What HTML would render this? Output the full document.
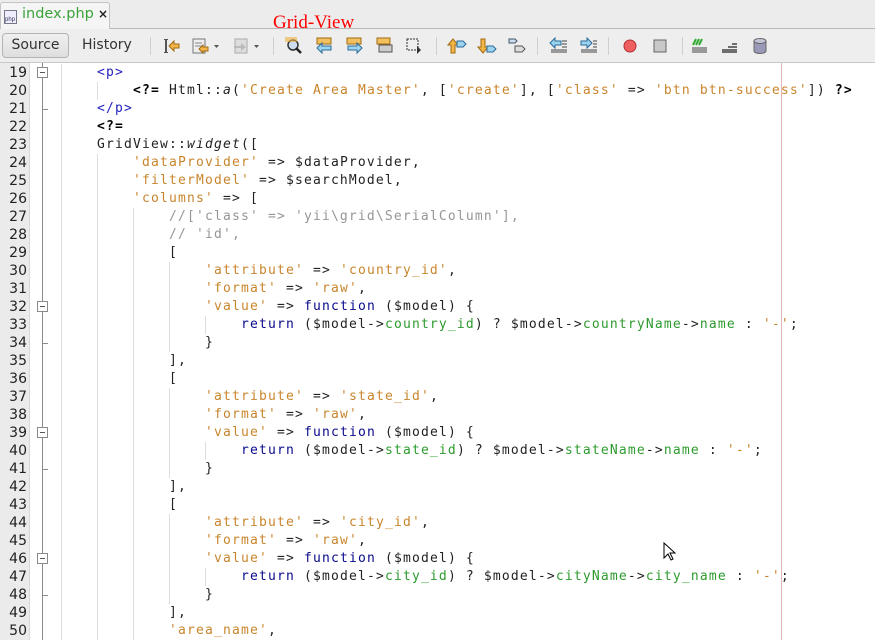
<!DOCTYPE html>
<html><head><meta charset="utf-8"><style>
*{margin:0;padding:0;box-sizing:border-box}
body{width:875px;height:640px;overflow:hidden;background:#fff;position:relative;font-family:"DejaVu Sans","Liberation Sans",sans-serif}
#tabbar{position:absolute;left:0;top:0;width:875px;height:29px;background:#ececec;border-bottom:1px solid #b8b8b8}
#tab{position:absolute;left:0;top:2px;width:110px;height:27px;background:#f5f5f5;border:1px solid #c4c4c4;border-bottom:none;border-radius:3px 3px 0 0}
#tab .t{position:absolute;left:21px;top:3px;font-size:14.5px;color:#3aa23a}
#tab .x{position:absolute;left:97px;top:4px;font-size:12px;color:#222;font-weight:bold}
#grid{position:absolute;left:273px;top:12px;font-family:"Liberation Serif",serif;font-size:19px;color:#ff0000}
#tb{position:absolute;left:0;top:29px;width:875px;height:34px;background:#eeeeee;border-bottom:1px solid #c8c8c8}
#src{position:absolute;left:2px;top:4px;width:67px;height:25px;border:1px solid #b4b4b4;border-radius:4px;background:linear-gradient(#f0f0f0,#dedede);font-size:14px;color:#333;text-align:center;line-height:23px}
#hist{position:absolute;left:82px;top:8px;font-size:14px;color:#333}
.sep{position:absolute;top:8px;width:1px;height:18px;background:#cfcfcf}
.ic{position:absolute;top:8px}
#ed{position:absolute;left:0;top:64px;width:875px;height:576px}
#gut{position:absolute;left:0;top:-1px;width:30px;height:577px;background:#ebebeb;border-right:1px solid #d8d8d8}
.ln{position:absolute;left:0;width:27px;text-align:right;font-size:14px;color:#222;height:18px;line-height:18px}
#fold{position:absolute;left:42px;top:-1px;width:1px;height:577px;background:#8a8a8a}
.fb{position:absolute;left:37px;width:11px;height:11px;border:1px solid #8a8a8a;background:#fff}
.fb:after{content:"";position:absolute;left:2px;top:4px;width:5px;height:1px;background:#555}
.ft{position:absolute;left:43px;width:5px;height:1px;background:#8a8a8a}
#margin{position:absolute;left:781px;top:-1px;width:1px;height:577px;background:#e2b4b4}
.l{position:absolute;left:61px;height:18px;line-height:18px;white-space:pre;font-family:"DejaVu Sans Mono",monospace;font-size:13px;letter-spacing:1.17px;color:#222}
.ind{display:inline-block;height:18px;vertical-align:top;background:repeating-linear-gradient(to right,#dcdcdc 0 1px,transparent 1px 36px)}
.s{color:#c9852c}.k{color:#0a0a8c}.g{color:#2d9b2d}.tg{color:#2222bb}.c{color:#969696}.b{font-weight:bold;color:#000}.i{font-style:italic}
</style></head><body>
<div id="tabbar"><div id="tab">
<svg style="position:absolute;left:3px;top:7px" width="14" height="14"><rect x="0.5" y="0.5" width="12" height="13" fill="#eef" stroke="#778"/><text x="1" y="11" font-size="6" fill="#335" font-family="Liberation Sans">php</text></svg>
<span class="t">index.php</span><span class="x">×</span></div></div>
<div id="grid">Grid-View</div>
<div id="tb">
<div id="src">Source</div><div id="hist">History</div>
<div class="sep" style="left:150px"></div>
<svg class="ic" style="left:162px" width="20" height="18"><rect x="3" y="2" width="2" height="14" fill="#555"/><rect x="2" y="2" width="4" height="1" fill="#555"/><rect x="2" y="15" width="4" height="1" fill="#555"/><path d="M7 9 L12 4 V7 H17 V11 H12 V14Z" fill="#f3b54a" stroke="#a06a10"/></svg>
<svg class="ic" style="left:192px" width="28" height="18"><rect x="1" y="2" width="12" height="14" fill="#eee" stroke="#777"/><path d="M3 6h7M3 9h7" stroke="#888"/><path d="M7 12 L11 8 V10 H16 V14 H11 V16Z" fill="#f3b54a" stroke="#a06a10"/><path d="M22 8 h5 l-2.5 3z" fill="#555"/></svg>
<svg class="ic" style="left:232px" width="28" height="18"><rect x="3" y="2" width="12" height="14" fill="#ddd" stroke="#aaa"/><path d="M2 9h7v-3l5 4-5 4v-3h-7z" fill="#bbb"/><path d="M22 8 h5 l-2.5 3z" fill="#555"/></svg>
<div class="sep" style="left:273px"></div>
<svg class="ic" style="left:285px" width="20" height="18"><circle cx="8" cy="8" r="5" fill="#cde" stroke="#333" stroke-width="1.5"/><path d="M11 11l5 5" stroke="#222" stroke-width="2.5"/><rect x="0" y="0" width="12" height="5" fill="#f0b040" opacity=".6"/></svg>
<svg class="ic" style="left:315px" width="20" height="18"><rect x="2" y="1" width="14" height="6" fill="#f3c060" stroke="#a06a10"/><path d="M2 11l5-5v3h9v4h-9v3z" fill="#9cd4f0" stroke="#2a6a9a"/></svg>
<svg class="ic" style="left:345px" width="20" height="18"><rect x="2" y="1" width="14" height="6" fill="#f3c060" stroke="#a06a10"/><path d="M17 11l-5-5v3h-9v4h9v3z" fill="#9cd4f0" stroke="#2a6a9a"/></svg>
<svg class="ic" style="left:375px" width="20" height="18"><rect x="2" y="1" width="13" height="6" fill="#f3c060" stroke="#a06a10"/><rect x="4" y="8" width="13" height="7" fill="#ccc" stroke="#555"/></svg>
<svg class="ic" style="left:405px" width="20" height="18"><rect x="2" y="2" width="11" height="11" fill="none" stroke="#333" stroke-dasharray="2 1"/><path d="M12 9v8l4-4z" fill="#333"/></svg>
<div class="sep" style="left:436px"></div>
<svg class="ic" style="left:447px" width="20" height="18"><path d="M6 2l-5 6h3v8h4V8h3z" fill="#f3b54a" stroke="#a06a10"/><path d="M10 4h6l3 3-3 3h-6z" fill="#9cd4f0" stroke="#2a6a9a"/></svg>
<svg class="ic" style="left:477px" width="20" height="18"><path d="M6 16l-5-6h3V2h4v8h3z" fill="#f3b54a" stroke="#a06a10"/><path d="M10 9h6l3 3-3 3h-6z" fill="#9cd4f0" stroke="#2a6a9a"/></svg>
<svg class="ic" style="left:507px" width="20" height="18"><path d="M2 2h6l2 2-2 2H2z" fill="#cde" stroke="#456"/><path d="M8 9h7l3 3-3 3H8z" fill="#ddd" stroke="#555"/></svg>
<div class="sep" style="left:537px"></div>
<svg class="ic" style="left:549px" width="20" height="18"><path d="M1 6l5-5v3h6v4H6v3z" fill="#9cd4f0" stroke="#2a6a9a"/><path d="M13 4h5M13 7h5M13 10h5M2 13h16M2 15h16" stroke="#444"/></svg>
<svg class="ic" style="left:579px" width="20" height="18"><path d="M13 6L8 1v3H2v4h6v3z" fill="#9cd4f0" stroke="#2a6a9a"/><path d="M14 4h4M14 7h4M14 10h4M2 13h16M2 15h16" stroke="#444"/></svg>
<div class="sep" style="left:608px"></div>
<svg class="ic" style="left:620px" width="20" height="18"><circle cx="10" cy="9" r="6" fill="#f06060" stroke="#b03030"/></svg>
<svg class="ic" style="left:650px" width="20" height="18"><rect x="4" y="3" width="12" height="12" fill="#c8c8c8" stroke="#666"/></svg>
<div class="sep" style="left:682px"></div>
<svg class="ic" style="left:690px" width="20" height="18"><path d="M3 8l3-6M6 8l3-6M9 8l3-6" stroke="#3a3" stroke-width="2"/><path d="M2 11h15M2 13h15M2 15h15" stroke="#444"/></svg>
<svg class="ic" style="left:720px" width="20" height="18"><path d="M12 7h5M8 10h9M2 13h15M2 15h15" stroke="#222" stroke-width="1.3"/></svg>
<svg class="ic" style="left:750px" width="20" height="18"><path d="M4 4v10a6 2.5 0 0 0 12 0V4z" fill="#9a9ab8" stroke="#666"/><ellipse cx="10" cy="4" rx="6" ry="2.5" fill="#c4c4da" stroke="#666"/></svg>
</div>
<div id="ed">
<div id="gut"></div>
<div id="fold"></div>
<div id="margin"></div>
</div>
<svg style="position:absolute;left:663px;top:542px" width="16" height="22"><path d="M1 1v15l4-4 3 6 2-1-3-6h5z" fill="#fff" stroke="#000"/></svg>
<script>
var L=[
[4,'<span class="tg">&lt;p&gt;</span>'],
[8,'<span class="b">&lt;?=</span> Html::<span class="i">a</span>(<span class="s">\'Create Area Master\'</span>, [<span class="s">\'create\'</span>], [<span class="s">\'class\'</span> =&gt; <span class="s">\'btn btn-success\'</span>]) <span class="b">?&gt;</span>'],
[4,'<span class="tg">&lt;/p&gt;</span>'],
[4,'<span class="b">&lt;?=</span>'],
[4,'GridView::<span class="i">widget</span>(['],
[8,'<span class="s">\'dataProvider\'</span> =&gt; $dataProvider,'],
[8,'<span class="s">\'filterModel\'</span> =&gt; $searchModel,'],
[8,'<span class="s">\'columns\'</span> =&gt; ['],
[12,'<span class="c">//[\'class\' =&gt; \'yii\\grid\\SerialColumn\'],</span>'],
[12,'<span class="c">// \'id\',</span>'],
[12,'['],
[16,'<span class="s">\'attribute\'</span> =&gt; <span class="s">\'country_id\'</span>,'],
[16,'<span class="s">\'format\'</span> =&gt; <span class="s">\'raw\'</span>,'],
[16,'<span class="s">\'value\'</span> =&gt; <span class="k">function</span> ($model) {'],
[20,'<span class="k">return</span> ($model-&gt;<span class="g">country_id</span>) ? $model-&gt;<span class="g">countryName</span>-&gt;<span class="g">name</span> : <span class="s">\'-\'</span>;'],
[16,'}'],
[12,'],'],
[12,'['],
[16,'<span class="s">\'attribute\'</span> =&gt; <span class="s">\'state_id\'</span>,'],
[16,'<span class="s">\'format\'</span> =&gt; <span class="s">\'raw\'</span>,'],
[16,'<span class="s">\'value\'</span> =&gt; <span class="k">function</span> ($model) {'],
[20,'<span class="k">return</span> ($model-&gt;<span class="g">state_id</span>) ? $model-&gt;<span class="g">stateName</span>-&gt;<span class="g">name</span> : <span class="s">\'-\'</span>;'],
[16,'}'],
[12,'],'],
[12,'['],
[16,'<span class="s">\'attribute\'</span> =&gt; <span class="s">\'city_id\'</span>,'],
[16,'<span class="s">\'format\'</span> =&gt; <span class="s">\'raw\'</span>,'],
[16,'<span class="s">\'value\'</span> =&gt; <span class="k">function</span> ($model) {'],
[20,'<span class="k">return</span> ($model-&gt;<span class="g">city_id</span>) ? $model-&gt;<span class="g">cityName</span>-&gt;<span class="g">city_name</span> : <span class="s">\'-\'</span>;'],
[16,'}'],
[12,'],'],
[12,'<span class="s">\'area_name\'</span>,']
];
var h='',ed=document.getElementById('ed');
for(var i=0;i<L.length;i++){var y=i*18;
h+='<div class="ln" style="top:'+y+'px">'+(19+i)+'</div>';
h+='<div class="l" style="top:'+y+'px"><span class="ind" style="width:'+(L[i][0]*9)+'px;letter-spacing:0"></span>'+L[i][1]+'</div>';}
[0,13,20,27].forEach(function(n){h+='<div class="fb" style="top:'+(n*18+3)+'px"></div>';});
[2,15,22,29].forEach(function(n){h+='<div class="ft" style="top:'+(n*18+9)+'px"></div>';});
ed.insertAdjacentHTML('beforeend',h);
</script>
</body></html>
